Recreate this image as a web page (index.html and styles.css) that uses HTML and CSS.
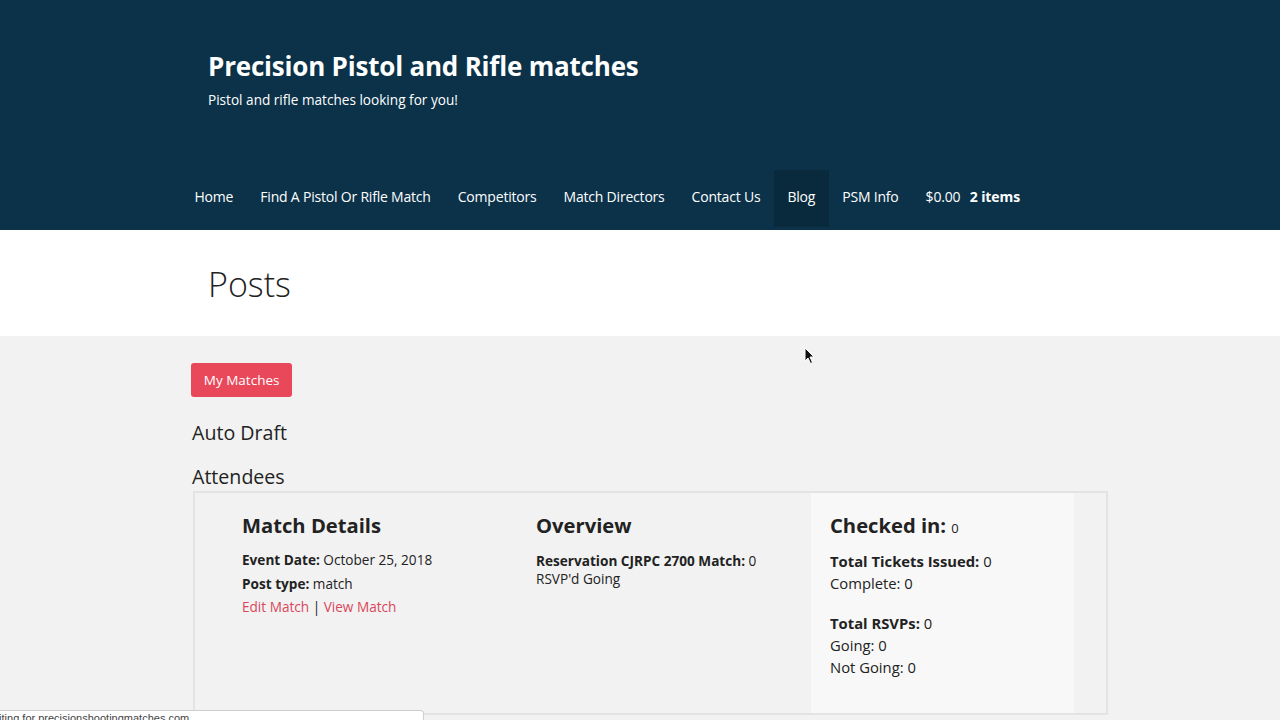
FILE: index.html
```html
<!DOCTYPE html>
<html lang="en">
<head>
<meta charset="utf-8">
<title>Posts – Precision Pistol and Rifle matches</title>
<link rel="stylesheet" href="styles.css">
</head>
<body>
<header class="site-header">
  <div class="wrap">
    <div class="branding">
      <h1 class="site-title">Precision Pistol and Rifle matches</h1>
      <p class="site-desc">Pistol and rifle matches looking for you!</p>
    </div>
    <nav class="main-nav">
      <a class="nav-item" href="#">Home</a>
      <a class="nav-item" href="#">Find A Pistol Or Rifle Match</a>
      <a class="nav-item" href="#">Competitors</a>
      <a class="nav-item" href="#">Match Directors</a>
      <a class="nav-item" href="#">Contact Us</a>
      <a class="nav-item active" href="#">Blog</a>
      <a class="nav-item" href="#">PSM Info</a>
      <a class="nav-item cart" href="#">$0.00 <strong>2 items</strong></a>
    </nav>
  </div>
</header>

<section class="page-head">
  <div class="wrap">
    <h2 class="page-title">Posts</h2>
  </div>
</section>

<main class="content">
  <div class="wrap">
    <a class="btn" href="#">My Matches</a>
    <h3 class="entry-title">Auto Draft</h3>
    <h3 class="entry-title attendees">Attendees</h3>
    <div class="panel">
      <div class="col">
        <h4 class="col-title">Match Details</h4>
        <div class="lines">
          <p class="line"><b>Event Date:</b> October 25, 2018</p>
          <p class="line"><b>Post type:</b> match</p>
          <p class="line"><a href="#">Edit Match</a> | <a href="#">View Match</a></p>
        </div>
      </div>
      <div class="col">
        <h4 class="col-title">Overview</h4>
        <p class="overview"><b>Reservation CJRPC 2700 Match:</b> 0<br>RSVP'd Going</p>
      </div>
      <div class="col stats">
        <h4 class="col-title">Checked in: <small>0</small></h4>
        <p class="stat"><b>Total Tickets Issued:</b> 0<br>Complete: 0</p>
        <p class="stat"><b>Total RSVPs:</b> 0<br>Going: 0<br>Not Going: 0</p>
      </div>
    </div>
  </div>
</main>

<div class="status-bar">Waiting for precisionshootingmatches.com</div>
<svg class="cursor" width="12" height="18" viewBox="0 0 12 18"><path d="M1 1 L1 14 L4 11 L6.5 16.5 L8.5 15.5 L6 10 L10 10 Z" fill="#111" stroke="#fff" stroke-width="1"/></svg>
</body>
</html>
```
FILE: styles.css
```css
* { box-sizing: border-box; }
html, body { margin: 0; padding: 0; }
body {
  font-family: "Open Sans", "Liberation Sans", sans-serif;
  color: #222;
  background: #f2f2f2;
  overflow: hidden;
  height: 720px;
}
a { text-decoration: none; }
.wrap {
  width: 916px;
  margin-left: calc(50% - 448px);
}
.site-header {
  background: #0b3249;
  color: #fff;
  height: 230px;
  padding-top: 48px;
}
.branding { padding-left: 16px; }
.site-title {
  margin: 0;
  font-size: 26px;
  line-height: 36px;
  font-weight: 700;
  letter-spacing: -0.2px;
}
.site-desc {
  margin: 6px 0 0;
  font-size: 13.6px;
  line-height: 20px;
}
.main-nav {
  display: flex;
  margin-top: 60px;
  margin-left: -11px;
  height: 57px;
}
.nav-item {
  color: #fff;
  font-size: 14px;
  line-height: 54px;
  height: 57px;
  padding: 0 13.5px;
  letter-spacing: -0.2px;
}
.nav-item.active { background: #092a3d; }
.nav-item.cart strong { font-weight: 700; margin-left: 6px; letter-spacing: -0.1px; }
.page-head {
  background: #fff;
  height: 106px;
  padding-top: 31px;
}
.page-title {
  margin: 0 0 0 16px;
  font-size: 34px;
  line-height: 46px;
  font-weight: 300;
  color: #222;
}
.content { padding-top: 27px; }
.btn {
  display: inline-block;
  margin-left: -1px;
  background: #e9475a;
  color: #fff;
  font-size: 13.5px;
  line-height: 34px;
  height: 34px;
  padding: 0 12.8px;
  border-radius: 3px;
}
.entry-title {
  margin: 23px 0 0;
  font-size: 19.6px;
  line-height: 26px;
  font-weight: 400;
}
.entry-title.attendees { margin-top: 18px; }
.panel {
  margin-top: 1px;
  margin-left: 1px;
  border: 2px solid #e3e3e3;
  display: grid;
  grid-template-columns: 263px 263px 263px;
  column-gap: 31px;
  padding: 0 30px 0 28px;
  height: 224px;
}
.col { padding: 18px 19px 0; }
.stats { background: #f8f8f8; }
.col-title {
  margin: 0 0 8px;
  font-size: 20.2px;
  line-height: 28px;
  font-weight: 700;
}
.col-title small { font-size: 13px; font-weight: 400; }
.lines { padding-top: 1px; }
.line {
  margin: 0;
  font-size: 13.6px;
  line-height: 23.5px;
}
.line a { color: #d9475a; }
.overview {
  margin: 13px 0 0;
  font-size: 13.6px;
  line-height: 18px;
}
.stat {
  margin: 0 0 18px;
  font-size: 14.8px;
  line-height: 22px;
}
.status-bar {
  position: fixed;
  left: 0;
  bottom: -8px;
  width: 424px;
  height: 18px;
  background: #fff;
  border: 1px solid #cfcfcf;
  border-left: none;
  border-radius: 0 4px 0 0;
  font-family: "Liberation Sans", sans-serif;
  font-size: 11px;
  line-height: 14px;
  color: #444;
  text-indent: -17px;
  overflow: hidden;
  white-space: nowrap;
}
.cursor {
  position: absolute;
  left: 804px;
  top: 347px;
}
```
